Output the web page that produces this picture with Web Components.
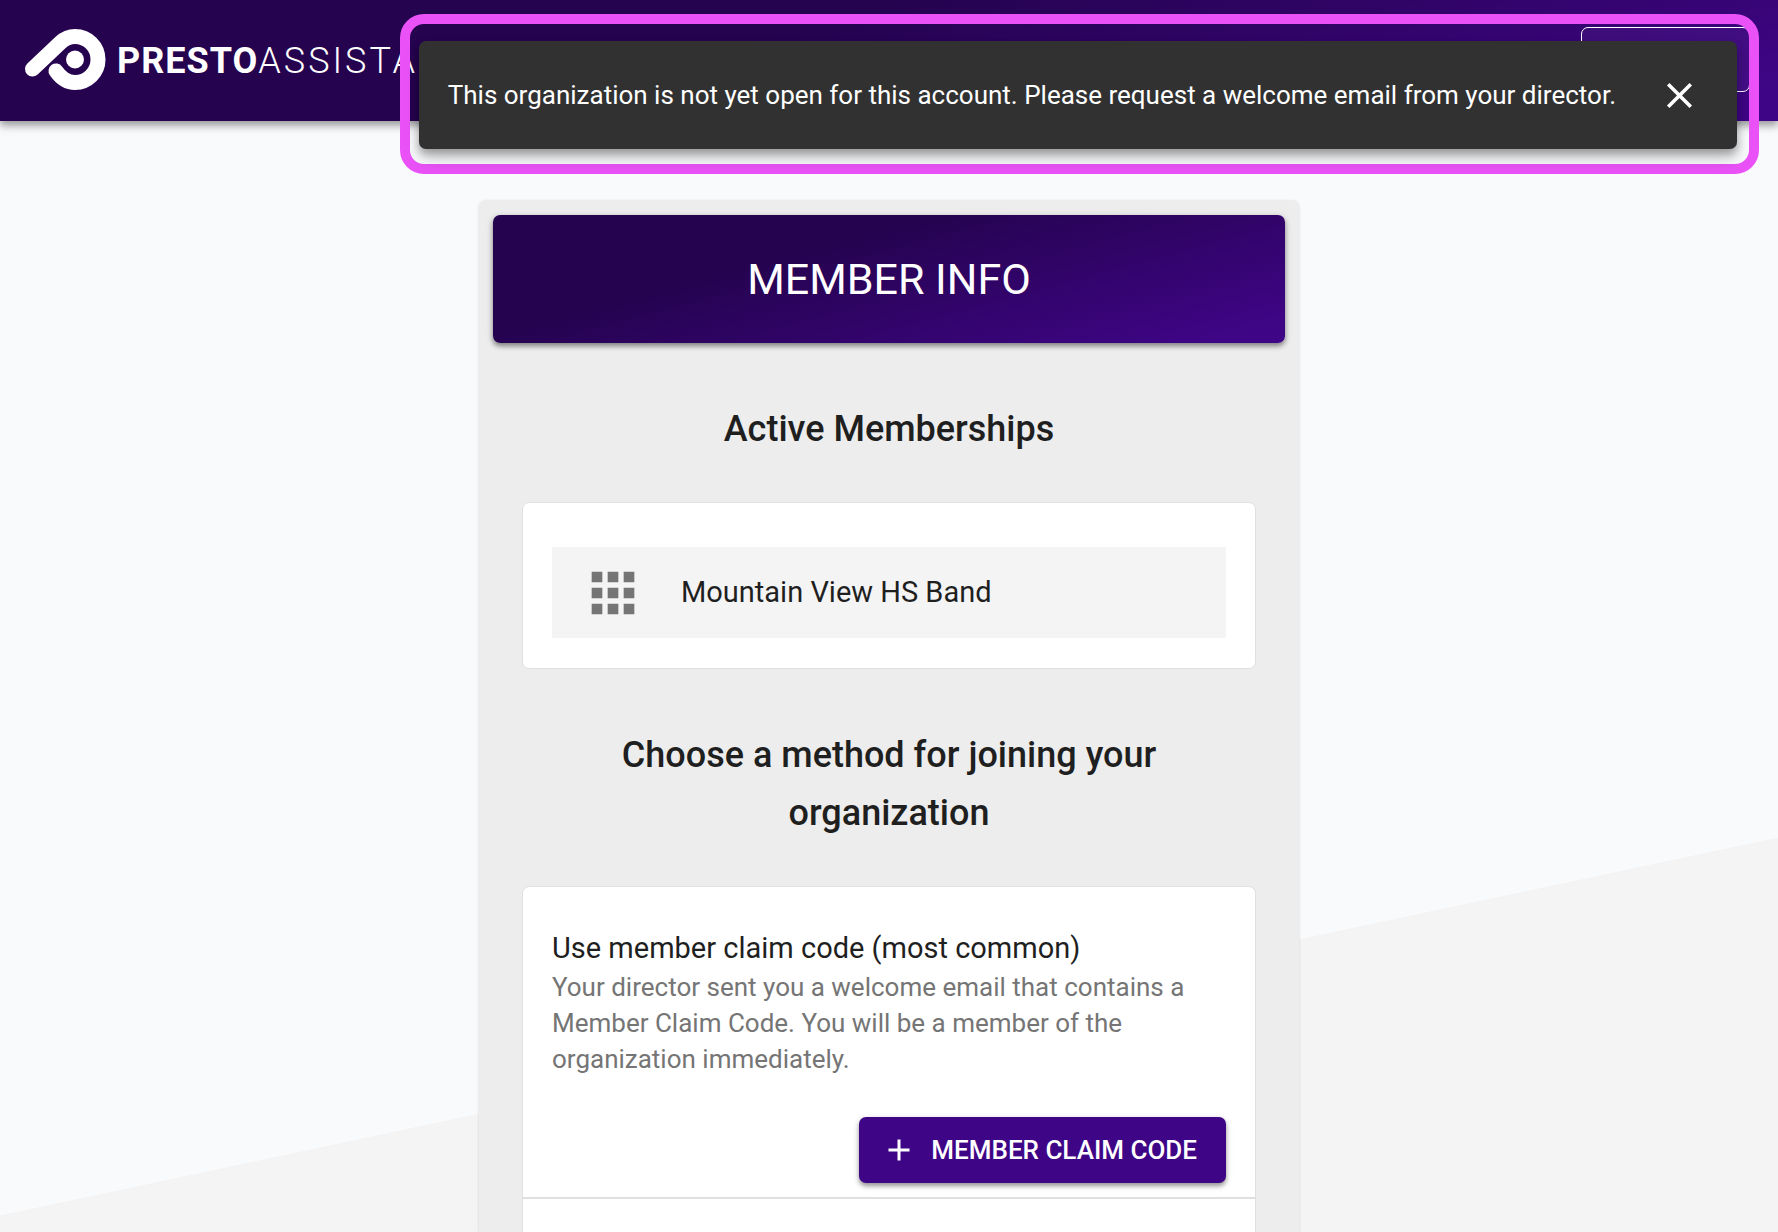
<!DOCTYPE html>
<html lang="en">
<head>
<meta charset="utf-8">
<meta name="viewport" content="width=device-width, initial-scale=1">
<title>Member Info</title>
<style>
  :root {
    --primary: #3f0587;
    --primary-dark: #25034f;
    --text: #1f1f1f;
    --muted: #757575;
    --line: #e0e0e0;
  }
  body {
    display: flex;
    flex-direction: column;
    min-height: 100vh;
    margin: 0;
    font-family: Roboto, "Liberation Sans", sans-serif;
    color: var(--text);
    background: linear-gradient(168deg, #f9fafc 75.5%, #f4f4f4 75.5%);
  }
  member-panel { flex: 1; }
  outlined-card:last-of-type {
    flex: 1;
    border-bottom: 0;
    border-radius: 7px 7px 0 0;
  }
</style>
</head>
<body>
  <app-header></app-header>

  <member-panel heading="Member Info">
    <section-title>Active Memberships</section-title>
    <outlined-card>
      <org-item>Mountain View HS Band</org-item>
    </outlined-card>

    <section-title>Choose a method for joining your organization</section-title>
    <outlined-card>
      <join-method action="Member Claim Code">
        <span slot="title">Use member claim code (most common)</span>
        Your director sent you a welcome email that contains a Member Claim Code. You will be a member of the organization immediately.
      </join-method>
    </outlined-card>
  </member-panel>

  <snack-bar>This organization is not yet open for this account. Please request a welcome email from your director.</snack-bar>

<script>
class AppHeader extends HTMLElement {
  constructor() {
    super();
    this.attachShadow({ mode: 'open' }).innerHTML = `
      <style>
        :host { display: block; }
        header {
          display: flex;
          align-items: center;
          justify-content: space-between;
          height: 121px;
          padding: 0 28px 0 25px;
          box-sizing: border-box;
          background: linear-gradient(165deg, var(--primary-dark) 40%, var(--primary) 95%);
          box-shadow: 0 4px 7px rgba(0, 0, 0, 0.3), 0 7px 9px rgba(0, 0, 0, 0.1);
        }
        a {
          display: flex;
          align-items: center;
          gap: 11px;
          color: #fff;
          text-decoration: none;
        }
        svg { width: 81px; height: 61px; overflow: visible; }
        .wordmark {
          font-size: 36px;
          font-weight: 300;
          line-height: 48px;
          letter-spacing: 3px;
        }
        b {
          font-weight: 700;
          letter-spacing: 1px;
        }
        button {
          width: 169px;
          height: 65px;
          margin-bottom: 3px;
          border: 1px solid #fff;
          border-radius: 7px;
          background: rgba(255, 255, 255, 0.04);
        }
      </style>
      <header>
        <a href="#">
          <svg viewBox="0 1 81 61" aria-hidden="true">
            <path d="M7.500 40 L35.500 13.500 Q42 7.500 50 7.500 A23 23 0 1 1 50 53.500 Q39 53.500 31 42" fill="none" stroke="#fff" stroke-width="15" stroke-linecap="round" stroke-linejoin="round"/>
            <circle cx="50" cy="30.500" r="9" fill="#fff"/>
          </svg>
          <span class="wordmark"><b>PRESTO</b>ASSISTANT</span>
        </a>
        <button type="button" aria-label="Account"></button>
      </header>
    `;
  }
}

class MemberPanel extends HTMLElement {
  connectedCallback() {
    this.attachShadow({ mode: 'open' }).innerHTML = `
      <style>
        :host {
          display: flex;
          flex-direction: column;
          box-sizing: border-box;
          width: 100%;
          max-width: 820px;
          margin: 79px auto 0;
          padding: 15px 14px 0;
          border-radius: 7px 7px 0 0;
          background: #ededed;
          box-shadow: 0 1px 3px rgba(0, 0, 0, 0.15);
        }
        h1 {
          margin: 0;
          padding: 32px;
          border-radius: 7px;
          background: linear-gradient(165deg, var(--primary-dark) 34%, var(--primary) 95%);
          box-shadow: 0 3px 5px rgba(0, 0, 0, 0.4), 0 2px 9px rgba(0, 0, 0, 0.12);
          color: #fff;
          font-size: 43px;
          font-weight: 400;
          line-height: 64px;
          text-align: center;
          text-transform: uppercase;
        }
        .content {
          display: flex;
          flex: 1;
          flex-direction: column;
          padding: 0 29px;
        }
      </style>
      <h1>${this.getAttribute('heading')}</h1>
      <div class="content"><slot></slot></div>
    `;
  }
}

class SectionTitle extends HTMLElement {
  constructor() {
    super();
    this.attachShadow({ mode: 'open' }).innerHTML = `
      <style>
        :host { display: block; }
        h2 {
          margin: 57px 29px 44px;
          font-size: 36px;
          font-weight: 500;
          line-height: 58px;
          text-align: center;
        }
      </style>
      <h2><slot></slot></h2>
    `;
  }
}

class OutlinedCard extends HTMLElement {
  constructor() {
    super();
    this.attachShadow({ mode: 'open' }).innerHTML = `
      <style>
        :host {
          display: block;
          border: 1px solid var(--line);
          border-radius: 7px;
          background: #fff;
        }
      </style>
      <slot></slot>
    `;
  }
}

class OrgItem extends HTMLElement {
  constructor() {
    super();
    this.attachShadow({ mode: 'open' }).innerHTML = `
      <style>
        :host { display: block; padding: 44px 29px 30px; }
        button {
          display: flex;
          align-items: center;
          gap: 36px;
          width: 100%;
          height: 91px;
          padding: 0 29px;
          border: 0;
          background: #f4f4f4;
          color: inherit;
          font: 400 29px/43px Roboto, sans-serif;
          text-align: left;
        }
        svg { width: 64px; height: 64px; fill: #757575; }
      </style>
      <button type="button">
        <svg viewBox="0 0 24 24" aria-hidden="true">
          <path d="M4 8h4V4H4v4zm6 12h4v-4h-4v4zm-6 0h4v-4H4v4zm0-6h4v-4H4v4zm6 0h4v-4h-4v4zm6-10v4h4V4h-4zm-6 4h4V4h-4v4zm6 6h4v-4h-4v4zm0 6h4v-4h-4v4z"/>
        </svg>
        <span><slot></slot></span>
      </button>
    `;
  }
}

class JoinMethod extends HTMLElement {
  connectedCallback() {
    this.attachShadow({ mode: 'open' }).innerHTML = `
      <style>
        :host {
          display: block;
          padding: 40px 29px 14px;
          border-bottom: 2px solid var(--line);
        }
        h3 {
          margin: 0;
          font-size: 29px;
          font-weight: 400;
          line-height: 42px;
        }
        p {
          margin: 0 0 40px;
          color: var(--muted);
          font-size: 26px;
          line-height: 36px;
        }
        .actions { display: flex; justify-content: flex-end; }
        button {
          display: flex;
          align-items: center;
          gap: 14px;
          height: 66px;
          padding: 0 29px 0 22px;
          border: 0;
          border-radius: 7px;
          background: var(--primary);
          box-shadow: 0 3px 4px rgba(0, 0, 0, 0.35), 0 2px 9px rgba(0, 0, 0, 0.12);
          color: #fff;
          font: 500 26px/44px Roboto, sans-serif;
          text-transform: uppercase;
        }
        svg { width: 36px; height: 36px; fill: currentColor; }
      </style>
      <h3><slot name="title"></slot></h3>
      <p><slot></slot></p>
      <div class="actions">
        <button type="button">
          <svg viewBox="0 0 24 24" aria-hidden="true"><path d="M19 13h-6v6h-2v-6H5v-2h6V5h2v6h6v2z"/></svg>
          ${this.getAttribute('action')}
        </button>
      </div>
    `;
  }
}

class SnackBar extends HTMLElement {
  constructor() {
    super();
    this.attachShadow({ mode: 'open' }).innerHTML = `
      <style>
        :host {
          position: absolute;
          top: 14px;
          right: 19px;
          padding: 17px 12px 15px 9px;
          border: 10px solid #ea52f8;
          border-radius: 24px;
        }
        .bar {
          display: flex;
          align-items: center;
          gap: 42px;
          height: 108px;
          padding: 0 36px 0 29px;
          border-radius: 7px;
          background: #313131;
          box-shadow: 0 5px 9px rgba(0, 0, 0, 0.3), 0 11px 18px rgba(0, 0, 0, 0.14);
          color: #fff;
          font-size: 26px;
          line-height: 36px;
        }
        button {
          display: flex;
          padding: 0;
          border: 0;
          background: none;
          color: inherit;
        }
        svg {
          width: 43px;
          height: 43px;
          fill: currentColor;
        }
      </style>
      <div class="bar" role="alert">
        <span><slot></slot></span>
        <button type="button" aria-label="Close">
          <svg viewBox="0 0 24 24" aria-hidden="true"><path d="M19 6.410L17.590 5 12 10.590 6.410 5 5 6.410 10.590 12 5 17.590 6.410 19 12 13.410 17.590 19 19 17.590 13.410 12z"/></svg>
        </button>
      </div>
    `;
    this.shadowRoot.querySelector('button').addEventListener('click', () => this.remove());
  }
}

customElements.define('app-header', AppHeader);
customElements.define('member-panel', MemberPanel);
customElements.define('section-title', SectionTitle);
customElements.define('outlined-card', OutlinedCard);
customElements.define('org-item', OrgItem);
customElements.define('join-method', JoinMethod);
customElements.define('snack-bar', SnackBar);
</script>
</body>
</html>
